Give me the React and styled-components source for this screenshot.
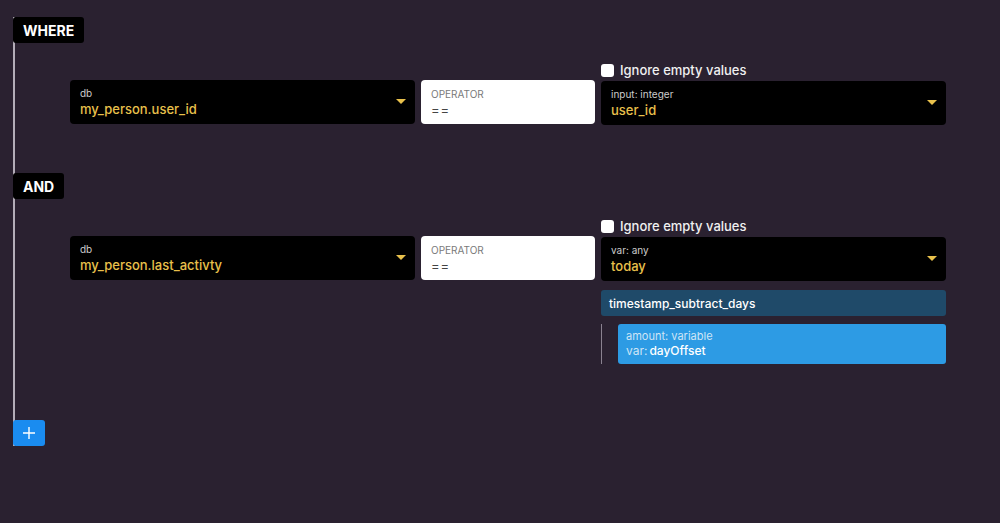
import React from "react";
import styled, { createGlobalStyle } from "styled-components";

const Global = createGlobalStyle`
  html, body { margin: 0; padding: 0; background: #2a2130; }
  body { font-family: Inter, "Noto Sans", sans-serif; }
  #root { min-height: 523px; }
`;

const Page = styled.div`
  padding: 17px 0 0 13px;
  min-height: 523px;
  box-sizing: border-box;
  background: #2a2130;
`;

const Tree = styled.div`
  display: flex;
  flex-direction: column;
  align-items: flex-start;
  border-left: 2px solid #b3adb8;
  width: 933px;
`;

const Keyword = styled.div`
  margin-left: -2px;
  height: 26px;
  padding: 0 10px;
  display: flex;
  align-items: center;
  background: #000;
  color: #fff;
  font-weight: 700;
  font-size: 14px;
  border-radius: 3px;
`;

const Row = styled.div`
  display: grid;
  grid-template-columns: 345px 174px 345px;
  column-gap: 6px;
  align-items: start;
  margin: 19px 0 48px 55px;
`;

const Offset = styled.div`
  margin-top: 18px;
`;

const Select = styled.div`
  position: relative;
  height: 44px;
  box-sizing: border-box;
  padding: 0 30px 0 10px;
  background: ${(p) => (p.$light ? "#fff" : "#000")};
  border-radius: 4px;
  display: flex;
  flex-direction: column;
  justify-content: center;
`;

const Sub = styled.div`
  font-size: 10px;
  color: ${(p) => (p.$upper ? "#7a7a7a" : "#cccccc")};
  line-height: 13px;
  text-transform: ${(p) => (p.$upper ? "uppercase" : "none")};
  margin-top: ${(p) => (p.$upper ? "2px" : "0")};
`;

const Value = styled.div`
  font-size: 13px;
  font-weight: ${(p) => (p.$light ? 400 : 500)};
  color: ${(p) => (p.$light ? "#444" : "#e9c14c")};
  line-height: 18px;
  letter-spacing: ${(p) => (p.$light ? "1px" : "0")};
`;

const Caret = styled.span`
  position: absolute;
  right: 9px;
  top: 50%;
  margin-top: -3px;
  width: 0;
  height: 0;
  border-left: 5px solid transparent;
  border-right: 5px solid transparent;
  border-top: 5px solid #e9c14c;
`;

const RightCol = styled.div`
  display: flex;
  flex-direction: column;
`;

const CheckRow = styled.label`
  display: flex;
  align-items: center;
  height: 19px;
  box-sizing: border-box;
  padding-bottom: 3px;
  gap: 6px;
  color: #f0f0f0;
  font-size: 13px;
  font-weight: 500;
`;

const Box = styled.span`
  width: 13px;
  height: 13px;
  background: #fff;
  border-radius: 3px;
  display: inline-block;
`;

const Func = styled.div`
  margin-top: 9px;
  height: 26px;
  background: #1f4a69;
  border-radius: 3px;
  color: #fff;
  font-size: 12px;
  font-weight: 500;
  display: flex;
  align-items: center;
  padding-left: 8px;
`;

const Nested = styled.div`
  margin-top: 8px;
  border-left: 1px solid #8a8290;
  padding-left: 16px;
`;

const Arg = styled.div`
  height: 40px;
  box-sizing: border-box;
  background: #2d9be4;
  border-radius: 3px;
  padding: 0 8px;
  display: flex;
  flex-direction: column;
  justify-content: center;
`;

const ArgLabel = styled.div`
  font-size: 11px;
  color: #cfe5f6;
  line-height: 13px;
`;

const ArgValue = styled.div`
  font-size: 12px;
  color: #fff;
  font-weight: 500;
  line-height: 16px;
  span { color: #cfe5f6; font-weight: 400; margin-right: 2px; }
`;

const AddButton = styled.button`
  margin: 8px 0 0 -2px;
  width: 32px;
  height: 26px;
  border: none;
  border-radius: 3px;
  background: #1a8cf0;
  display: flex;
  align-items: center;
  justify-content: center;
  padding: 0;
  cursor: pointer;
`;

function DarkSelect({ label, value }) {
  return (
    <Select>
      <Sub>{label}</Sub>
      <Value>{value}</Value>
      <Caret />
    </Select>
  );
}

function Operator() {
  return (
    <Select $light>
      <Sub $upper>Operator</Sub>
      <Value $light>==</Value>
    </Select>
  );
}

function Condition({ left, rightLabel, rightValue, children }) {
  return (
    <Row>
      <Offset>
        <DarkSelect label="db" value={left} />
      </Offset>
      <Offset>
        <Operator />
      </Offset>
      <RightCol>
        <CheckRow>
          <Box />
          Ignore empty values
        </CheckRow>
        <DarkSelect label={rightLabel} value={rightValue} />
        {children}
      </RightCol>
    </Row>
  );
}

export default function App() {
  return (
    <Page>
      <Global />
      <Tree>
        <Keyword>WHERE</Keyword>
        <Condition left="my_person.user_id" rightLabel="input: integer" rightValue="user_id" />
        <Keyword>AND</Keyword>
        <Condition left="my_person.last_activty" rightLabel="var: any" rightValue="today">
          <Func>timestamp_subtract_days</Func>
          <Nested>
            <Arg>
              <ArgLabel>amount: variable</ArgLabel>
              <ArgValue>
                <span>var:</span>dayOffset
              </ArgValue>
            </Arg>
          </Nested>
        </Condition>
        <AddButton aria-label="add">
          <svg width="14" height="14" viewBox="0 0 14 14">
            <path d="M7 1v12M1 7h12" stroke="#fff" strokeWidth="1.4" />
          </svg>
        </AddButton>
      </Tree>
    </Page>
  );
}
